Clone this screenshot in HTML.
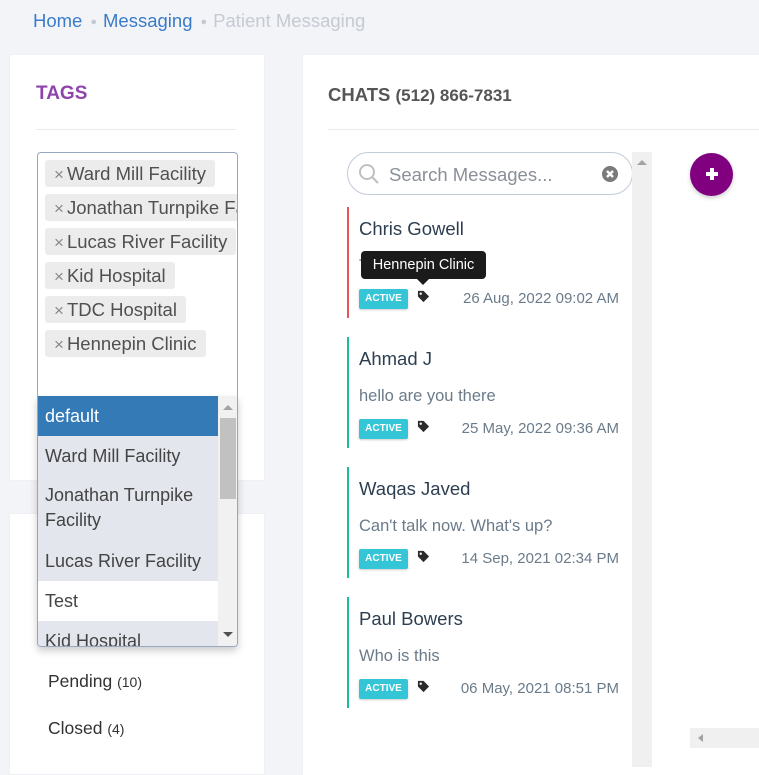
<!DOCTYPE html>
<html><head><meta charset="utf-8">
<style>
*{box-sizing:border-box;margin:0;padding:0}
body{width:759px;height:767px;overflow:hidden;background:#f3f4f8;font-family:"Liberation Sans","DejaVu Sans",sans-serif;position:relative}
.a{position:absolute}
.card{position:absolute;background:#fff;box-shadow:0 0 2px rgba(0,0,0,.05)}
.chip{position:absolute;left:44px;height:27px;background:#ececec;border-radius:3px;font-size:18.5px;color:#505050;line-height:27px;padding:0 9px 0 9px;white-space:nowrap}
.chip b{font-weight:normal;color:#888;font-size:17px;margin-right:3px}
.opt{position:absolute;left:0;width:180px;font-size:18px;color:#444;padding-left:7px;background:#e3e6ed}
.item{position:absolute;left:347px;width:280px;height:111px;border-left:2px solid #1abc9c}
.nm{position:absolute;left:10px;top:11px;font-size:18.5px;color:#2c3e50}
.msg{position:absolute;left:10px;top:50px;font-size:16.5px;color:#6b7b8a}
.badge{position:absolute;left:10px;top:82px;width:49px;height:20px;background:#34c6d6;border-radius:2px;color:#fff;font-size:10px;font-weight:bold;text-align:center;line-height:20px;box-shadow:0 1px 2px rgba(0,0,0,.2)}
.tag{position:absolute;left:68px;top:83px}
.dt{position:absolute;right:8px;top:83px;font-size:15px;color:#6b7b8a}
.sep{color:#c5c9d3;font-size:11px;vertical-align:2px;margin:0 6px 0 8px}
</style></head><body>
<div class="a" style="left:33px;top:10px;font-size:18.5px;color:#3a7bc8;white-space:nowrap">Home<span class="sep">●</span>Messaging<span class="sep">●</span><span style="color:#c5cad3">Patient Messaging</span></div>

<div class="card" style="left:10px;top:55px;width:254px;height:425px"></div>
<div class="card" style="left:10px;top:514px;width:254px;height:260px"></div>
<div class="a" style="left:36px;top:83px;font-size:19px;font-weight:bold;color:#8e44ad">TAGS</div>
<div class="a" style="left:36px;top:129px;width:200px;height:1px;background:#e8eaee"></div>

<div class="a" style="left:37px;top:152px;width:201px;height:260px;border:1px solid #97a7c0;border-radius:4px;overflow:hidden;background:#fff">
<div class="chip" style="left:7px;top:7px"><b>×</b>Ward Mill Facility</div>
<div class="chip" style="left:7px;top:41px;width:200px"><b>×</b>Jonathan Turnpike Facility</div>
<div class="chip" style="left:7px;top:75px"><b>×</b>Lucas River Facility</div>
<div class="chip" style="left:7px;top:109px"><b>×</b>Kid Hospital</div>
<div class="chip" style="left:7px;top:143px"><b>×</b>TDC Hospital</div>
<div class="chip" style="left:7px;top:177px"><b>×</b>Hennepin Clinic</div>
</div>

<div class="a" style="left:37px;top:396px;width:201px;height:251px;border:1px solid #97a7c0;border-top:none;border-radius:0 0 4px 4px;overflow:hidden;background:#fff;box-shadow:0 4px 8px rgba(0,0,0,.2)">
<div class="opt" style="top:0;height:40px;line-height:40px;background:#337ab7;color:#fff">default</div>
<div class="opt" style="top:40px;height:40px;line-height:40px">Ward Mill Facility</div>
<div class="opt" style="top:80px;height:65px;line-height:25px;padding-top:7px">Jonathan Turnpike Facility</div>
<div class="opt" style="top:145px;height:40px;line-height:40px">Lucas River Facility</div>
<div class="opt" style="top:185px;height:40px;line-height:40px;background:#fff">Test</div>
<div class="opt" style="top:225px;height:40px;line-height:40px">Kid Hospital</div>
<div class="a" style="left:180px;top:0;width:20px;height:251px;background:#f1f1f1"></div>
<div class="a" style="left:182px;top:22px;width:16px;height:81px;background:#c1c1c1"></div>
<div class="a" style="left:185px;top:9px;width:0;height:0;border-left:5px solid transparent;border-right:5px solid transparent;border-bottom:5px solid #a3a3a3"></div>
<div class="a" style="left:185px;top:236px;width:0;height:0;border-left:5px solid transparent;border-right:5px solid transparent;border-top:5px solid #505050"></div>
</div>

<div class="a" style="left:48px;top:671px;font-size:17.5px;color:#333">Pending <span style="font-size:14px">(10)</span></div>
<div class="a" style="left:48px;top:718px;font-size:17.5px;color:#333">Closed <span style="font-size:14px">(4)</span></div>

<div class="card" style="left:303px;top:55px;width:470px;height:720px"></div>
<div class="a" style="left:328px;top:84px;font-size:18.5px;font-weight:bold;color:#555">CHATS <span style="font-size:17px">(512) 866-7831</span></div>
<div class="a" style="left:328px;top:129px;width:431px;height:1px;background:#e8eaee"></div>

<div class="a" style="left:347px;top:152px;width:286px;height:43px;border:1px solid #c2cbd8;border-radius:22px;background:#fff"></div>
<svg class="a" style="left:358px;top:163px" width="22" height="22" viewBox="0 0 22 22"><circle cx="9" cy="9" r="7" fill="none" stroke="#c0c0c0" stroke-width="2"/><line x1="14" y1="14" x2="20" y2="20" stroke="#c0c0c0" stroke-width="2.2"/></svg>
<div class="a" style="left:389px;top:164px;font-size:18.5px;color:#8a8f98">Search Messages...</div>
<svg class="a" style="left:601px;top:165px" width="18" height="18" viewBox="0 0 18 18"><circle cx="9" cy="9" r="8" fill="#7a7a7a"/><path d="M6 6L12 12M12 6L6 12" stroke="#fff" stroke-width="2.4"/></svg>

<div class="a" style="left:632px;top:152px;width:20px;height:615px;background:#f0f0f0"></div>
<div class="a" style="left:637px;top:160px;width:0;height:0;border-left:5px solid transparent;border-right:5px solid transparent;border-bottom:5px solid #a3a3a3"></div>

<div class="a" style="left:690px;top:153px;width:43px;height:43px;border-radius:50%;background:#800080;box-shadow:0 2px 4px rgba(0,0,0,.2)"></div>
<div class="a" style="left:706px;top:172px;width:12px;height:4px;background:#fff"></div>
<div class="a" style="left:710px;top:168px;width:4px;height:12px;background:#fff"></div>

<div class="a" style="left:690px;top:728px;width:69px;height:20px;background:#f0f0f0"></div>
<div class="a" style="left:698px;top:734px;width:0;height:0;border-top:4px solid transparent;border-bottom:4px solid transparent;border-right:5px solid #a3a3a3"></div>

<svg width="0" height="0" style="position:absolute"><defs><symbol id="tg" viewBox="0 0 14 14"><path d="M1 1h6l6 6-6 6-6-6z" fill="#2b2b2b"/><circle cx="4" cy="4" r="1.3" fill="#fff"/></symbol></defs></svg>

<div class="item" style="top:207px;border-left-color:#e8545c">
<div class="nm">Chris Gowell</div>
<div class="msg">Test</div>
<div class="badge">ACTIVE</div>
<svg class="tag" width="13" height="13"><use href="#tg"/></svg>
<div class="dt">26 Aug, 2022 09:02 AM</div>
</div>
<div class="a" style="left:361px;top:251px;width:125px;height:28px;background:#1b1b1b;border-radius:4px;color:#fff;font-size:14.5px;line-height:28px;text-align:center">Hennepin Clinic</div>
<div class="a" style="left:417px;top:279px;width:0;height:0;border-left:6px solid transparent;border-right:6px solid transparent;border-top:6px solid #1b1b1b"></div>

<div class="item" style="top:337px">
<div class="nm">Ahmad J</div>
<div class="msg">hello are you there</div>
<div class="badge">ACTIVE</div>
<svg class="tag" width="13" height="13"><use href="#tg"/></svg>
<div class="dt">25 May, 2022 09:36 AM</div>
</div>
<div class="item" style="top:467px">
<div class="nm">Waqas Javed</div>
<div class="msg">Can't talk now. What's up?</div>
<div class="badge">ACTIVE</div>
<svg class="tag" width="13" height="13"><use href="#tg"/></svg>
<div class="dt">14 Sep, 2021 02:34 PM</div>
</div>
<div class="item" style="top:597px">
<div class="nm">Paul Bowers</div>
<div class="msg">Who is this</div>
<div class="badge">ACTIVE</div>
<svg class="tag" width="13" height="13"><use href="#tg"/></svg>
<div class="dt">06 May, 2021 08:51 PM</div>
</div>
</body></html>
